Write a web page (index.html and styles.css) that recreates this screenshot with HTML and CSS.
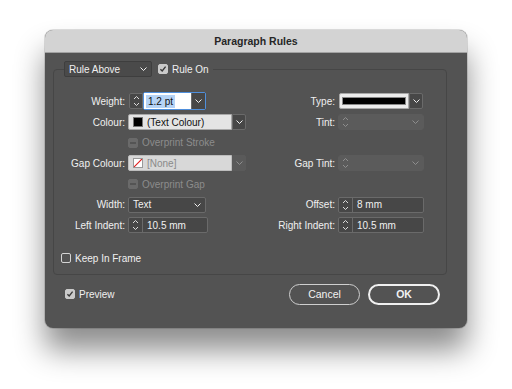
FILE: index.html
```html
<!DOCTYPE html>
<html lang="en">
<head>
  <meta charset="UTF-8" />
  <meta name="viewport" content="width=device-width, initial-scale=1.0" />
  <title>Paragraph Rules</title>
  <link rel="stylesheet" href="styles.css">
</head>
<body>

  <div class="dialog">
    <!-- title bar -->
    <div class="titlebar">Paragraph Rules</div>

    <!-- rule group -->
    <fieldset class="group">
      <legend class="group-head">
        <div class="select dark rule-select">
          <span class="val">Rule Above</span>
          <span class="chev"><svg width="7" height="4" viewBox="0 0 7 4"><path d="M.5 .5 3.5 3.5 6.5 .5"/></svg></span>
        </div>
        <label class="check"><span class="box on"><svg width="8" height="8" viewBox="0 0 8 8"><path d="M1.4 4.2 3.2 6 6.6 1.6"/></svg></span>Rule On</label>
      </legend>

      <div class="form">
        <!-- row 1 -->
        <span class="lbl">Weight:</span>
        <div class="combo weight">
          <span class="arrows box-arrows"><svg width="7" height="12" viewBox="0 0 7 12"><path d="M1 4 3.5 1.5 6 4M1 8 3.5 10.5 6 8"/></svg></span>
          <div class="focus">
            <span class="val"><span class="sel">1.2 pt</span></span>
            <span class="drop"><svg width="7" height="4" viewBox="0 0 7 4"><path d="M.5 .5 3.5 3.5 6.5 .5"/></svg></span>
          </div>
        </div>
        <span class="lbl">Type:</span>
        <div class="select light type">
          <span class="val"><span class="line"></span></span>
          <span class="drop"><svg width="7" height="4" viewBox="0 0 7 4"><path d="M.5 .5 3.5 3.5 6.5 .5"/></svg></span>
        </div>

        <!-- row 2 -->
        <span class="lbl">Colour:</span>
        <div class="select light colour">
          <span class="val"><span class="swatch black"></span>(Text Colour)</span>
          <span class="drop"><svg width="7" height="4" viewBox="0 0 7 4"><path d="M.5 .5 3.5 3.5 6.5 .5"/></svg></span>
        </div>
        <span class="lbl">Tint:</span>
        <div class="spin off">
          <span class="arrows"><svg width="7" height="12" viewBox="0 0 7 12"><path d="M1 4 3.5 1.5 6 4M1 8 3.5 10.5 6 8"/></svg></span>
          <span class="val"></span>
          <span class="chev"><svg width="7" height="4" viewBox="0 0 7 4"><path d="M.5 .5 3.5 3.5 6.5 .5"/></svg></span>
        </div>

        <!-- row 3 -->
        <label class="check dim span"><span class="box dis"></span>Overprint Stroke</label>

        <!-- row 4 -->
        <span class="lbl">Gap Colour:</span>
        <div class="select light colour off">
          <span class="val"><span class="swatch none"><svg width="10" height="10" viewBox="0 0 10 10"><path d="M0 10 10 0"/></svg></span>[None]</span>
          <span class="drop"><svg width="7" height="4" viewBox="0 0 7 4"><path d="M.5 .5 3.5 3.5 6.5 .5"/></svg></span>
        </div>
        <span class="lbl">Gap Tint:</span>
        <div class="spin off">
          <span class="arrows"><svg width="7" height="12" viewBox="0 0 7 12"><path d="M1 4 3.5 1.5 6 4M1 8 3.5 10.5 6 8"/></svg></span>
          <span class="val"></span>
          <span class="chev"><svg width="7" height="4" viewBox="0 0 7 4"><path d="M.5 .5 3.5 3.5 6.5 .5"/></svg></span>
        </div>

        <!-- row 5 -->
        <label class="check dim span"><span class="box dis"></span>Overprint Gap</label>

        <!-- row 6 -->
        <span class="lbl">Width:</span>
        <div class="select dark width">
          <span class="val">Text</span>
          <span class="chev"><svg width="7" height="4" viewBox="0 0 7 4"><path d="M.5 .5 3.5 3.5 6.5 .5"/></svg></span>
        </div>
        <span class="lbl">Offset:</span>
        <div class="spin">
          <span class="arrows"><svg width="7" height="12" viewBox="0 0 7 12"><path d="M1 4 3.5 1.5 6 4M1 8 3.5 10.5 6 8"/></svg></span>
          <span class="val">8 mm</span>
        </div>

        <!-- row 7 -->
        <span class="lbl">Left Indent:</span>
        <div class="spin left">
          <span class="arrows"><svg width="7" height="12" viewBox="0 0 7 12"><path d="M1 4 3.5 1.5 6 4M1 8 3.5 10.5 6 8"/></svg></span>
          <span class="val">10.5 mm</span>
        </div>
        <span class="lbl">Right Indent:</span>
        <div class="spin">
          <span class="arrows"><svg width="7" height="12" viewBox="0 0 7 12"><path d="M1 4 3.5 1.5 6 4M1 8 3.5 10.5 6 8"/></svg></span>
          <span class="val">10.5 mm</span>
        </div>
      </div>

      <label class="check keep"><span class="box"></span>Keep In Frame</label>
    </fieldset>

    <!-- footer -->
    <div class="footer">
      <label class="check"><span class="box on"><svg width="8" height="8" viewBox="0 0 8 8"><path d="M1.4 4.2 3.2 6 6.6 1.6"/></svg></span>Preview</label>
      <div class="buttons">
        <button class="btn">Cancel</button>
        <button class="btn ok">OK</button>
      </div>
    </div>
  </div>

</body>
</html>
```

FILE: styles.css
```css
/* ===== base ===== */
*{box-sizing:border-box}
html{background:#fff}
body{
  margin:0;
  min-height:100vh;
  padding-top:30px;
  font-family:"Liberation Sans",Arial,sans-serif;
  font-size:10px;
  color:#f0f0f0;
}
svg{display:block}
svg path{fill:none;stroke:currentColor;stroke-width:1}

/* ===== window ===== */
.dialog{
  width:422px;
  height:298px;
  margin-left:45px;
  background:#535353;
  border-radius:8px;
  overflow:hidden;
  box-shadow:0 22px 30px rgba(0,0,0,.45),0 0 0 1px rgba(0,0,0,.12);
}
.titlebar{
  height:23px;
  line-height:22px;
  background:#d3d3d3;
  border-bottom:1px solid #a2a2a2;
  text-align:center;
  font-size:10.5px;
  font-weight:700;
  color:#262626;
}

/* ===== group box ===== */
.group{
  margin:8px 20px 0 8px;
  padding:14px 0 10px;
  border:1px solid #464646;
  border-radius:4px;
  min-width:0;
}
.group-head{
  margin-left:10px;
  padding:0 4px 0 0;
  display:flex;
  align-items:center;
  gap:6px;
}

/* ===== form grid ===== */
.form{
  display:grid;
  grid-template-columns:71px 118px 86px 86px;
  grid-template-rows:repeat(7,20.7px);
  column-gap:3px;
  align-items:center;
}
.lbl{text-align:right}
.span{grid-column:2 / -1}

/* ===== checkboxes ===== */
.check{display:flex;align-items:center;gap:4px}
.box{
  width:10px;height:10px;
  border-radius:2px;
  border:1px solid #d4d4d4;
  display:flex;align-items:center;justify-content:center;
}
.box.on{background:#cacaca;border-color:#cacaca;color:#3a3a3a}
.box.on path{stroke-width:1.4}
.box.dis{background:#6a6a6a;border-color:#6a6a6a}
.box.dis::after{content:"";width:6px;height:2px;background:#545454}
.dim{color:#8c8c8c}
.keep{margin:17px 0 0 7px}

/* ===== selects ===== */
.select{
  height:16px;
  display:flex;
  align-items:stretch;
  border-radius:2px;
}
.select .val{flex:1;display:flex;align-items:center;padding-left:4px;white-space:nowrap}
.chev{width:16px;display:flex;align-items:center;justify-content:center}
.dark{background:#474747;border:1px solid #6a6a6a}
.rule-select{width:88px;border-color:#3e3e3e;background:#4a4a4a}
.width{width:78px}
.light{border:none}
.light .val{background:#e4e4e4;border:1px solid #a8a8a8;border-radius:2px 0 0 2px;color:#111}
.drop{
  width:14px;
  background:#474747;
  border:1px solid #6a6a6a;
  border-radius:0 2px 2px 0;
  display:flex;align-items:center;justify-content:center;
  color:#eee;
}
.colour{width:118px}
.type{width:84px;margin-left:1px}
.type .val{padding:0 3px;background:#ececec}
.line{flex:1;height:6px;background:#000;outline:1px solid #888}
.swatch{width:10px;height:10px;margin-right:4px;flex:none}
.swatch.black{background:#000;border:1px solid #777}
.swatch.none{background:#fff;border:1px solid #999;color:#e01b1b}
.swatch.none svg{width:8px;height:8px}
.swatch.none path{stroke-width:1.4}
.select.off .val{background:#d8d8d8;border-color:#bdbdbd;color:#8a8a8a}
.select.off .drop{background:#5a5a5a;border-color:#5a5a5a;color:#8e8e8e}

/* ===== steppers ===== */
.spin{
  height:16px;
  display:flex;
  border:1px solid #6a6a6a;
  border-radius:2px;
  background:#474747;
}
.arrows{
  width:14px;
  border-right:1px solid #6a6a6a;
  display:flex;align-items:center;justify-content:center;
  color:#dcdcdc;
}
.spin .val{flex:1;display:flex;align-items:center;padding-left:4px}
.left{width:80px}
.spin.off{background:#5b5b5b;border-color:#5b5b5b;border-radius:3px}
.spin.off .arrows{border-color:#5b5b5b;color:#8e8e8e}
.spin.off .chev{color:#8e8e8e}

/* ===== weight combo (focused) ===== */
.combo{display:flex;height:18px;margin-left:1px;width:77px}
.box-arrows{height:16px;margin-top:1px;border:1px solid #6a6a6a;border-radius:2px 0 0 2px;background:#474747}
.focus{
  flex:1;
  display:flex;
  border:1.5px solid #4f8fdc;
  border-radius:2px;
}
.focus .val{flex:1;background:#fff;display:flex;align-items:center;padding-left:2px;color:#111}
.sel{background:#b5d3f6;padding:1px 2px}
.focus .drop{border:none;border-left:1px solid #6a6a6a;border-radius:0}

/* ===== footer ===== */
.footer{
  display:flex;
  align-items:center;
  justify-content:space-between;
  padding:9px 27px 0 20px;
}
.buttons{display:flex;gap:8px}
.btn{
  height:21px;
  width:71px;
  border:1px solid #cfcfcf;
  border-radius:11px;
  background:#535353;
  color:#f2f2f2;
  font-family:inherit;
  font-size:10.5px;
}
.btn.ok{width:72px;border:2px solid #f0f0f0;font-weight:700}
```
